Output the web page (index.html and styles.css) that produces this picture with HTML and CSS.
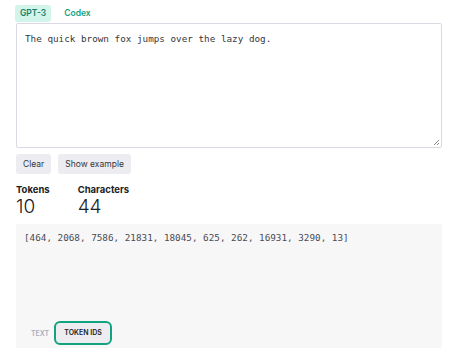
FILE: index.html
```html
<!DOCTYPE html>
<html>
<head>
<meta charset="utf-8">
<link rel="stylesheet" href="styles.css">
</head>
<body>
<div class="page">
  <div class="model-tabs">
    <span class="mtab active">GPT-3</span>
    <span class="mtab">Codex</span>
  </div>
  <div class="input-box">
    <div class="input-text">The quick brown fox jumps over the lazy dog.</div>
    <svg class="grip" width="7" height="7" viewBox="0 0 7 7"><path d="M6 1L1 6M6 4L4 6" stroke="#888" stroke-width="1"/></svg>
  </div>
  <div class="actions">
    <button class="btn">Clear</button>
    <button class="btn">Show example</button>
  </div>
  <div class="stats">
    <div class="stat">
      <div class="stat-label">Tokens</div>
      <div class="stat-value">10</div>
    </div>
    <div class="stat">
      <div class="stat-label">Characters</div>
      <div class="stat-value">44</div>
    </div>
  </div>
  <div class="output">
    <div class="output-text">[464, 2068, 7586, 21831, 18045, 625, 262, 16931, 3290, 13]</div>
    <div class="view-tabs">
      <span class="vtab">TEXT</span>
      <span class="vtab active">TOKEN IDS</span>
    </div>
  </div>
</div>
</body>
</html>
```

FILE: styles.css
```css
* { box-sizing: border-box; }
html, body { margin: 0; padding: 0; background: #fff; }
body { font-family: Inter, "Noto Sans", sans-serif; color: #202123; }
.page { padding: 4px 32px 0 16px; width: 474px; }
.model-tabs { display: flex; gap: 8px; align-items: center; height: 18px; margin-left: -1px; }
.mtab { font-size: 8.5px; font-weight: 600; color: #10a37f; padding: 3px 5px; border-radius: 3px; line-height: 11px; }
.mtab.active { background: #d2f4ea; color: #1a7f64; }
.input-box { position: relative; margin-top: 1px; height: 125px; border: 1px solid #d9d9e3; border-radius: 2px; padding: 9px 8px; }
.input-text { font-family: "DejaVu Sans Mono", monospace; font-size: 9.3px; color: #353740; line-height: 12px; }
.grip { position: absolute; right: 1px; bottom: 1px; }
.actions { display: flex; gap: 7px; margin-top: 6px; }
.btn { font-family: Inter, sans-serif; font-size: 8.5px; color: #353740; background: #ececf1; border: none; border-radius: 3px; height: 20px; padding: 0 7px; }
.stats { display: flex; gap: 28px; margin-top: 10px; }
.stat-label { font-size: 9.5px; font-weight: 700; color: #202123; line-height: 12px; }
.stat-value { font-size: 19px; font-weight: 300; color: #202123; line-height: 22px; }
.output { margin-top: 6px; height: 124px; background: #f7f7f8; border-radius: 2px; padding: 8px 8px 3px 8px; display: flex; flex-direction: column; justify-content: space-between; }
.output-text { font-family: "DejaVu Sans Mono", monospace; font-size: 9.3px; color: #4a4b55; line-height: 12px; }
.view-tabs { display: flex; align-items: center; gap: 5px; padding-left: 7px; }
.vtab { font-size: 7px; font-weight: 600; color: #acacbe; }
.vtab.active { color: #202123; background: #ececf1; border: 2px solid #10a37f; border-radius: 6px; padding: 6px 8px; line-height: 8px; }
```
